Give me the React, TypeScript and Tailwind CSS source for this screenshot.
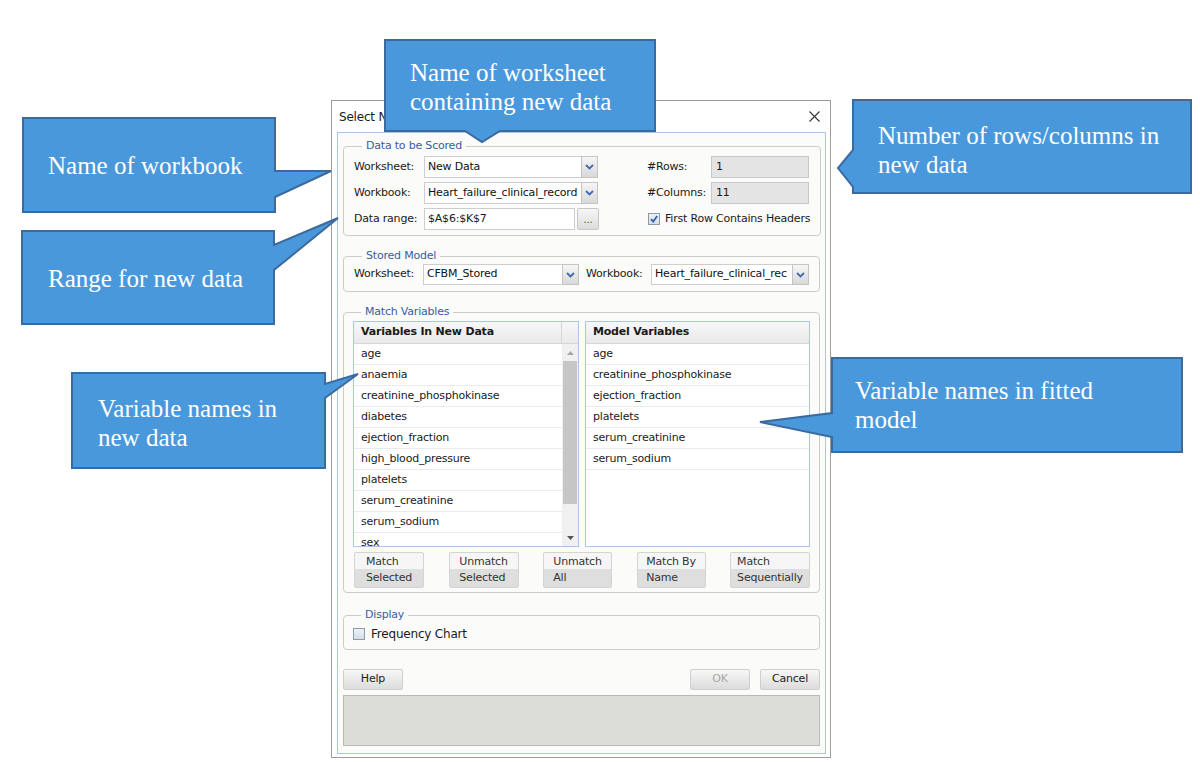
import React from 'react';

function Chevron() {
  return (
    <svg width="9" height="6" viewBox="0 0 9 6">
      <path d="M1 1 L4.5 4.5 L8 1" fill="none" stroke="#3f69b5" strokeWidth="1.8" />
    </svg>
  );
}

function Select({ value, w, h }: { value: string; w: string; h: string }) {
  return (
    <div className={`flex ${h}`}>
      <div className={`${w} h-full bg-white border border-[#cdcdcd] border-r-0 flex items-center pl-[3px] overflow-hidden whitespace-nowrap text-[#111]`}>
        {value}
      </div>
      <div className="w-[17px] h-full border border-[#c4c4c4] bg-[linear-gradient(to_bottom,#f6f6f6,#d8d8d8)] flex items-center justify-center">
        <Chevron />
      </div>
    </div>
  );
}

function Group({ title, children, className }: { title: string; children: React.ReactNode; className: string }) {
  return (
    <fieldset className={`border border-[#cccccc] rounded-[4px] ${className}`}>
      <legend className="ml-[8px] px-[4px] leading-[14px] text-[#3a5da0]">{title}</legend>
      {children}
    </fieldset>
  );
}

function TwoBtn({ a, b, w }: { a: string; b: string; w: string }) {
  return (
    <div className={`${w} h-[36px] rounded-[2px] border border-[#d4d4d4] bg-[linear-gradient(to_bottom,#f6f6f6_0%,#f6f6f6_48%,#dedede_48%,#dedede_100%)] flex items-center justify-center text-[#333]`}>
      <div className="leading-[16px] text-left">
        <div>{a}</div>
        <div>{b}</div>
      </div>
    </div>
  );
}

function Btn({ label, disabled }: { label: string; disabled?: boolean }) {
  return (
    <div
      className={`w-[60px] h-[21px] rounded-[2px] border border-[#cfcfcf] bg-[linear-gradient(to_bottom,#f7f7f7,#dcdcdc)] flex items-center justify-center ${
        disabled ? 'text-[#a8a8a8]' : 'text-[#222]'
      }`}
    >
      {label}
    </div>
  );
}

function CheckBox({ checked }: { checked?: boolean }) {
  return (
    <div className="w-[12px] h-[12px] shrink-0 border border-[#8f9aa8] bg-[linear-gradient(to_bottom,#eef2f7,#d6dde6)] flex items-center justify-center">
      {checked ? (
        <svg width="10" height="10" viewBox="0 0 10 10">
          <path d="M2 5.2 L4.2 7.6 L8.2 2" fill="none" stroke="#2f62b8" strokeWidth="1.8" />
        </svg>
      ) : null}
    </div>
  );
}

const leftVars = [
  'age',
  'anaemia',
  'creatinine_phosphokinase',
  'diabetes',
  'ejection_fraction',
  'high_blood_pressure',
  'platelets',
  'serum_creatinine',
  'serum_sodium',
  'sex',
  'smoking',
];

const rightVars = ['age', 'creatinine_phosphokinase', 'ejection_fraction', 'platelets', 'serum_creatinine', 'serum_sodium'];

function Dialog() {
  return (
    <div className="w-[500px] h-[658px] border border-[#9c9c9c] bg-white flex flex-col font-['DejaVu_Sans',sans-serif] text-[11px] tracking-[-0.2px] text-[#1a1a1a]">
      <div className="h-[31px] flex items-center justify-between pl-[7px] pr-[10px] text-[12px]">
        <span>Select New Data</span>
        <svg width="11" height="11" viewBox="0 0 11 11">
          <path d="M0.5 0.5 L10.5 10.5 M10.5 0.5 L0.5 10.5" stroke="#333" strokeWidth="1.1" />
        </svg>
      </div>
      <div className="flex-1 ml-[5px] mr-[4px] mb-[3px] border border-[#aac6e4] bg-[#fbfbf9] px-[5px] pt-[6px] flex flex-col">
        <Group title="Data to be Scored" className="px-[10px] pt-[3px] pb-[5px]">
          <div className="flex flex-col gap-[4px]">
            <div className="flex items-center h-[22px]">
              <div className="w-[70px]">Worksheet:</div>
              <Select value="New Data" w="w-[157px]" h="h-[22px]" />
              <div className="ml-[49px] w-[64px]">#Rows:</div>
              <div className="w-[98px] h-[22px] bg-[#e4e4e4] border border-[#c8c8c8] flex items-center pl-[4px]">1</div>
            </div>
            <div className="flex items-center h-[22px]">
              <div className="w-[70px]">Workbook:</div>
              <Select value="Heart_failure_clinical_record" w="w-[157px]" h="h-[22px]" />
              <div className="ml-[49px] w-[64px]">#Columns:</div>
              <div className="w-[98px] h-[22px] bg-[#e4e4e4] border border-[#c8c8c8] flex items-center pl-[4px]">11</div>
            </div>
            <div className="flex items-center h-[22px]">
              <div className="w-[70px]">Data range:</div>
              <div className="w-[151px] h-[22px] bg-white border border-[#cdcdcd] flex items-center pl-[3px]">$A$6:$K$7</div>
              <div className="ml-[2px] w-[22px] h-[22px] border border-[#c8c8c8] rounded-[2px] bg-[linear-gradient(to_bottom,#f6f6f6,#dcdcdc)] flex items-center justify-center text-[#555] text-[10px]">
                ...
              </div>
              <div className="ml-[49px] flex items-center gap-[5px] whitespace-nowrap">
                <CheckBox checked />
                <span>First Row Contains Headers</span>
              </div>
            </div>
          </div>
        </Group>

        <Group title="Stored Model" className="mt-[13px] px-[10px] pt-[1px] pb-[6px]">
          <div className="flex items-center h-[21px]">
            <div className="w-[69px]">Worksheet:</div>
            <Select value="CFBM_Stored" w="w-[139px]" h="h-[21px]" />
            <div className="ml-[7px] w-[65px]">Workbook:</div>
            <Select value="Heart_failure_clinical_rec" w="w-[141px]" h="h-[21px]" />
          </div>
        </Group>

        <Group title="Match Variables" className="mt-[13px] px-[9px] pt-[2px] pb-[4px]">
          <div className="flex justify-between h-[226px]">
            <div className="w-[226px] h-full border border-[#aac6e4] bg-white flex flex-col">
              <div className="h-[22px] flex border-b border-[#d6d6d6] bg-[linear-gradient(to_bottom,#f7f7f7,#e9e9e9)] font-bold">
                <div className="flex-1 flex items-center px-[7px]">Variables In New Data</div>
                <div className="w-[17px] border-l border-[#d6d6d6]"></div>
              </div>
              <div className="flex-1 flex overflow-hidden">
                <div className="flex-1 overflow-hidden">
                  {leftVars.map((v) => (
                    <div key={v} className="h-[21px] border-b border-[#ebebeb] flex items-center px-[7px]">
                      {v}
                    </div>
                  ))}
                </div>
                <div className="w-[16px] bg-[#f0f0f0] flex flex-col">
                  <div className="h-[17px] flex items-center justify-center">
                    <svg width="7" height="4" viewBox="0 0 7 4">
                      <path d="M0 4 L3.5 0 L7 4 Z" fill="#a8a8a8" />
                    </svg>
                  </div>
                  <div className="h-[143px] mx-[1px] bg-[#c6c6c6]"></div>
                  <div className="flex-1"></div>
                  <div className="h-[17px] flex items-center justify-center">
                    <svg width="7" height="4" viewBox="0 0 7 4">
                      <path d="M0 0 L3.5 4 L7 0 Z" fill="#555" />
                    </svg>
                  </div>
                </div>
              </div>
            </div>
            <div className="w-[225px] h-full border border-[#aac6e4] bg-white flex flex-col">
              <div className="h-[22px] flex items-center px-[7px] border-b border-[#d6d6d6] bg-[linear-gradient(to_bottom,#f7f7f7,#e9e9e9)] font-bold">
                Model Variables
              </div>
              {rightVars.map((v) => (
                <div key={v} className="h-[21px] border-b border-[#ebebeb] flex items-center px-[7px]">
                  {v}
                </div>
              ))}
            </div>
          </div>
          <div className="mt-[5px] flex justify-between pl-[1px]">
            <TwoBtn a="Match" b="Selected" w="w-[70px]" />
            <TwoBtn a="Unmatch" b="Selected" w="w-[70px]" />
            <TwoBtn a="Unmatch" b="All" w="w-[69px]" />
            <TwoBtn a="Match By" b="Name" w="w-[69px]" />
            <TwoBtn a="Match" b="Sequentially" w="w-[80px]" />
          </div>
        </Group>

        <Group title="Display" className="mt-[15px] px-[9px] pt-[4px] pb-[7px]">
          <div className="h-[16px] flex items-center gap-[6px] text-[12px]">
            <CheckBox />
            <span>Frequency Chart</span>
          </div>
        </Group>

        <div className="mt-[19px] flex items-center">
          <Btn label="Help" />
          <div className="flex-1"></div>
          <Btn label="OK" disabled />
          <div className="w-[10px]"></div>
          <Btn label="Cancel" />
        </div>

        <div className="mt-[5px] h-[51px] border border-[#b9b9b9] bg-[#dcdcd8]"></div>
      </div>
    </div>
  );
}

type Callout = { pts: string; left: string; top: string; w: string; h: string; pl: string; lines: string[] };

const callouts: Callout[] = [
  {
    pts: '385,40 655,40 655,131 500,131 482,142 465,131 385,131',
    left: 'left-[385px]',
    top: 'top-[40px]',
    w: 'w-[270px]',
    h: 'h-[91px]',
    pl: 'pl-[25px] pt-[3px]',
    lines: ['Name of worksheet', 'containing new data'],
  },
  {
    pts: '23,118 275,118 275,171 331,171 275,197 275,212 23,212',
    left: 'left-[23px]',
    top: 'top-[118px]',
    w: 'w-[252px]',
    h: 'h-[94px]',
    pl: 'pl-[25px]',
    lines: ['Name of workbook'],
  },
  {
    pts: '22,231 274,231 274,245 338,218 274,270 274,324 22,324',
    left: 'left-[22px]',
    top: 'top-[231px]',
    w: 'w-[252px]',
    h: 'h-[93px]',
    pl: 'pl-[26px] pt-[2px]',
    lines: ['Range for new data'],
  },
  {
    pts: '853,100 1191,100 1191,193 853,193 853,187 838,168 853,150',
    left: 'left-[853px]',
    top: 'top-[100px]',
    w: 'w-[338px]',
    h: 'h-[93px]',
    pl: 'pl-[25px] pt-[6px]',
    lines: ['Number of rows/columns in', 'new data'],
  },
  {
    pts: '72,373 325,373 325,384 358,374 325,398 325,468 72,468',
    left: 'left-[72px]',
    top: 'top-[373px]',
    w: 'w-[253px]',
    h: 'h-[95px]',
    pl: 'pl-[26px] pt-[4px]',
    lines: ['Variable names in', 'new data'],
  },
  {
    pts: '832,358 1182,358 1182,452 832,452 832,437 760,422 832,413',
    left: 'left-[832px]',
    top: 'top-[358px]',
    w: 'w-[350px]',
    h: 'h-[94px]',
    pl: 'pl-[23px]',
    lines: ['Variable names in fitted', 'model'],
  },
];

export default function App() {
  return (
    <div className="relative w-[1200px] h-[762px] bg-white overflow-hidden">
      <div className="pt-[100px] pl-[331px]">
        <Dialog />
      </div>
      <svg className="absolute inset-0 pointer-events-none" width="1200" height="762" viewBox="0 0 1200 762">
        {callouts.map((c, i) => (
          <polygon key={i} points={c.pts} fill="#4a98dc" stroke="#3b6a9f" strokeWidth="2" strokeLinejoin="miter" />
        ))}
      </svg>
      {callouts.map((c, i) => (
        <div
          key={i}
          className={`absolute ${c.left} ${c.top} ${c.w} ${c.h} ${c.pl} flex flex-col justify-center font-['Liberation_Serif',serif] text-[25px] leading-[29px] text-white`}
        >
          {c.lines.map((l) => (
            <div key={l} className="whitespace-nowrap">
              {l}
            </div>
          ))}
        </div>
      ))}
    </div>
  );
}
